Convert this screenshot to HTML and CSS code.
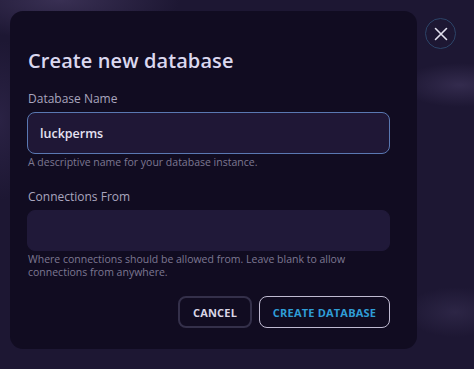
FILE: index.html
```html
<!DOCTYPE html>
<html>
<head>
<meta charset="utf-8">
<link rel="stylesheet" href="styles.css">
</head>
<body>
<div class="stage">
  <div class="modal">
    <h1 class="title">Create new database</h1>
    <div class="field">
      <label class="label">Database Name</label>
      <div class="input focused">luckperms</div>
      <p class="help">A descriptive name for your database instance.</p>
    </div>
    <div class="field second">
      <label class="label">Connections From</label>
      <div class="input"></div>
      <p class="help">Where connections should be allowed from. Leave blank to allow connections from anywhere.</p>
    </div>
    <div class="actions">
      <button class="btn cancel">CANCEL</button>
      <button class="btn create">CREATE DATABASE</button>
    </div>
  </div>
  <button class="close" aria-label="Close">
    <svg width="14" height="14" viewBox="0 0 14 14"><path d="M1.5 1.5 L12.5 12.5 M12.5 1.5 L1.5 12.5" stroke="#e2e0ee" stroke-width="1.6" stroke-linecap="round" fill="none"/></svg>
  </button>
</div>
</body>
</html>
```
FILE: styles.css
```css
html, body {
  margin: 0;
  padding: 0;
  width: 474px;
  height: 369px;
  overflow: hidden;
}
body {
  font-family: "Open Sans", "Noto Sans", sans-serif;
  background:
    radial-gradient(ellipse 120px 40px at 60px 0px, rgba(80,68,110,0.55), transparent),
    radial-gradient(ellipse 60px 22px at 460px 85px, rgba(70,60,100,0.55), transparent),
    radial-gradient(ellipse 50px 25px at 455px 312px, rgba(60,52,88,0.5), transparent),
    radial-gradient(ellipse 40px 80px at 0px 120px, rgba(55,45,85,0.5), transparent),
    #1d1733;
}
.stage {
  display: flex;
  align-items: flex-start;
  padding: 11px 0 0 10px;
}
.modal {
  width: 407px;
  height: 338px;
  box-sizing: border-box;
  background: #110c21;
  border-radius: 13px;
  padding: 38px 27px 0 17px;
  display: flex;
  flex-direction: column;
}
.title {
  margin: 0 0 0 1px;
  font-size: 20px;
  line-height: 24px;
  font-weight: 600;
  color: #dbd8ef;
  letter-spacing: 0.1px;
}
.field {
  margin-top: 18px;
  display: flex;
  flex-direction: column;
}
.field.second {
  margin-top: 20px;
}
.label {
  margin-left: 1px;
  font-size: 12px;
  line-height: 16px;
  color: #a9a5be;
}
.input {
  margin-top: 5px;
  height: 41px;
  box-sizing: border-box;
  border-radius: 8px;
  background: #201939;
  border: 1.5px solid #201939;
  padding: 0 12px;
  display: flex;
  align-items: center;
  font-size: 12.5px;
  font-weight: 600;
  color: #e6e3f2;
}
.input.focused {
  height: 42px;
  border-color: #5a78b2;
  background: #1f1736;
}
.help {
  margin: 2px 0 0 1px;
  font-size: 10.5px;
  line-height: 13px;
  color: #7d7892;
  max-width: 352px;
}
.actions {
  margin-top: 17px;
  display: flex;
  justify-content: flex-end;
  gap: 7px;
}
.btn {
  height: 32px;
  box-sizing: border-box;
  border-radius: 8px;
  background: transparent;
  font-family: "Open Sans", "Noto Sans", sans-serif;
  font-size: 11px;
  font-weight: 700;
  letter-spacing: 0.2px;
  padding: 0;
}
.cancel {
  width: 74px;
  border: 2px solid #34304a;
  color: #d9d6e6;
}
.create {
  width: 131px;
  border: 1.5px solid #c0bbd2;
  color: #2f9dd6;
}
.close {
  margin: 7px 0 0 8px;
  width: 31px;
  height: 31px;
  box-sizing: border-box;
  border-radius: 50%;
  border: 1.5px solid #2c4468;
  background: transparent;
  display: flex;
  align-items: center;
  justify-content: center;
  padding: 0;
}
.close svg {
  display: block;
}
```
